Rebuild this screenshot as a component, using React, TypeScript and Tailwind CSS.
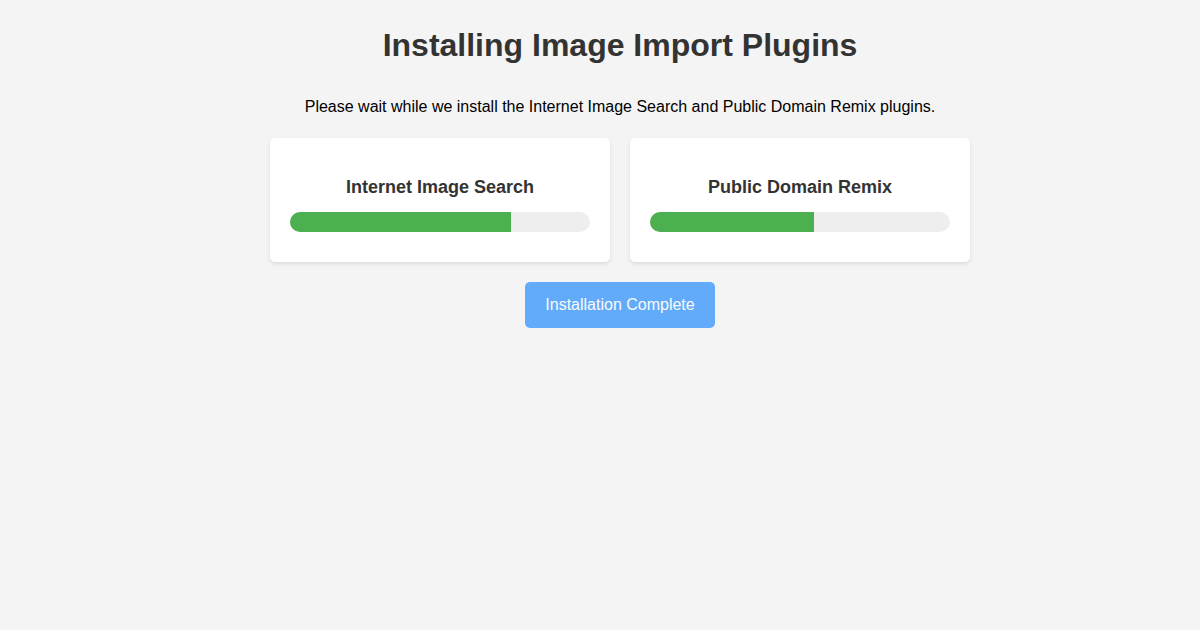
import React from "react";

const plugins = [
  { name: "Internet Image Search", progress: 73.67 },
  { name: "Public Domain Remix", progress: 54.67 },
];

export default function App() {
  return (
    <div
      className="min-h-[630px] w-full bg-[#f4f4f4] pl-10 flex flex-col items-center"
      style={{ fontFamily: '"Liberation Sans", Arial, sans-serif' }}
    >
      <h1 className="mt-[27px] text-[32px] leading-[37px] font-bold text-[#333]">
        Installing Image Import Plugins
      </h1>
      <p className="mt-[34px] text-[16px] leading-[18px] text-black">
        Please wait while we install the Internet Image Search and Public Domain Remix plugins.
      </p>
      <div className="mt-[22px] flex gap-5">
        {plugins.map((p) => (
          <div
            key={p.name}
            className="w-[340px] bg-white rounded-[5px] shadow-[0_2px_4px_rgba(0,0,0,0.1)] px-5 pt-5 pb-5 flex flex-col items-center"
          >
            <h3 className="mt-[19px] mb-[14px] text-[18px] leading-[21px] font-bold text-[#333]">
              {p.name}
            </h3>
            <div className="w-full h-5 rounded-[10px] bg-[#eeeeee] overflow-hidden mb-[10px]">
              <div className="h-full bg-[#4caf50]" style={{ width: `${p.progress}%` }} />
            </div>
          </div>
        ))}
      </div>
      <button className="mt-5 h-[46px] w-[190px] rounded-[5px] bg-[#007bff] opacity-60 text-white text-[16px]">
        Installation Complete
      </button>
    </div>
  );
}
